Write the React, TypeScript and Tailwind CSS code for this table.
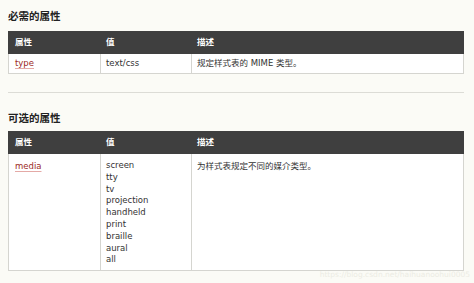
import React from 'react';

const font = { fontFamily: '"DejaVu Sans", Verdana, "Noto Sans CJK SC", sans-serif' };

interface Row {
  name: string;
  values: string[];
  desc: string;
}

const required: Row[] = [{ name: 'type', values: ['text/css'], desc: '规定样式表的 MIME 类型。' }];

const optional: Row[] = [
  {
    name: 'media',
    values: ['screen', 'tty', 'tv', 'projection', 'handheld', 'print', 'braille', 'aural', 'all'],
    desc: '为样式表规定不同的媒介类型。',
  },
];

const AttrTable = ({ rows, tall }: { rows: Row[]; tall?: boolean }) => (
  <table className="w-[456px] border-collapse table-fixed text-[8.5px] text-[#333]">
    <colgroup>
      <col className="w-[92px]" />
      <col className="w-[91px]" />
      <col />
    </colgroup>
    <thead>
      <tr className="h-[22px] bg-[#3f3f3f] text-white font-bold text-left">
        <th className="px-[6px] border border-[#3f3f3f]">属性</th>
        <th className="px-[5px] border border-[#3f3f3f]">值</th>
        <th className="px-[5px] border border-[#3f3f3f]">描述</th>
      </tr>
    </thead>
    <tbody className="bg-white">
      {rows.map((r) => (
        <tr key={r.name} className={tall ? 'align-top' : 'h-[20px]'}>
          <td className={`px-[6px] border border-[#d5d5d0] ${tall ? 'pt-[6px] pb-[4px]' : ''}`}>
            <span className="text-[#9b2a26] underline decoration-[#e4a9a6] underline-offset-2">{r.name}</span>
          </td>
          <td className={`px-[5px] border border-[#d5d5d0] ${tall ? 'pt-[6px] pb-[4px]' : ''}`}>
            {r.values.map((v) => (
              <div key={v} className="leading-[11.8px]">{v}</div>
            ))}
          </td>
          <td className={`px-[5px] border border-[#d5d5d0] ${tall ? 'pt-[6px] pb-[4px]' : ''}`}>{r.desc}</td>
        </tr>
      ))}
    </tbody>
  </table>
);

export default function App() {
  return (
    <div className="w-[474px] h-[283px] bg-[#fbfbf6] overflow-hidden relative" style={font}>
      <div className="pl-[8px] pt-[9px]">
        <h2 className="text-[10.5px] font-bold text-[#222] leading-[14px] mb-[8px]">必需的属性</h2>
        <AttrTable rows={required} />
        <div className="w-[456px] h-[1px] bg-[#dcdcd6] mt-[18px] mb-[18px]" />
        <h2 className="text-[10.5px] font-bold text-[#222] leading-[14px] mb-[6px]">可选的属性</h2>
        <AttrTable rows={optional} tall />
      </div>
      <div className="absolute right-[4px] bottom-[3px] text-[7.5px] text-[#ecece4]">https://blog.csdn.net/haihuanoohui0005</div>
    </div>
  );
}
